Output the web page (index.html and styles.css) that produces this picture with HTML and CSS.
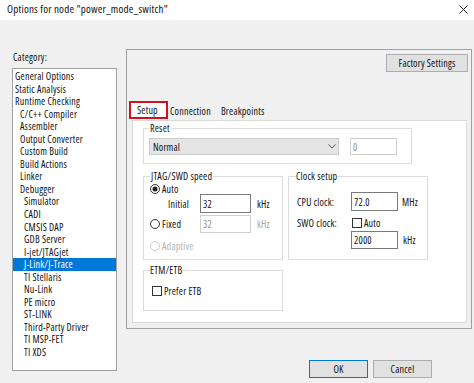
FILE: index.html
```html
<!DOCTYPE html>
<html>
<head>
<meta charset="utf-8">
<title>Options for node</title>
<link rel="stylesheet" href="styles.css">
</head>
<body>
<div class="titlebar">
  <span class="title">Options for node "power_mode_switch"</span>
  <svg class="close" width="9" height="9" viewBox="0 0 9 9"><path d="M0.5 0.5L8.5 8.5M8.5 0.5L0.5 8.5" stroke="#222" stroke-width="1" fill="none"/></svg>
</div>
<div class="content">
  <div class="left">
    <div class="cat-label">Category:</div>
    <ul class="listbox">
      <li class="l0">General Options</li>
      <li class="l0">Static Analysis</li>
      <li class="l0">Runtime Checking</li>
      <li class="l1">C/C++ Compiler</li>
      <li class="l1">Assembler</li>
      <li class="l1">Output Converter</li>
      <li class="l1">Custom Build</li>
      <li class="l1">Build Actions</li>
      <li class="l1">Linker</li>
      <li class="l1">Debugger</li>
      <li class="l2">Simulator</li>
      <li class="l2">CADI</li>
      <li class="l2">CMSIS DAP</li>
      <li class="l2">GDB Server</li>
      <li class="l2">I-jet/JTAGjet</li>
      <li class="l2 sel">J-Link/J-Trace</li>
      <li class="l2">TI Stellaris</li>
      <li class="l2">Nu-Link</li>
      <li class="l2">PE micro</li>
      <li class="l2">ST-LINK</li>
      <li class="l2">Third-Party Driver</li>
      <li class="l2">TI MSP-FET</li>
      <li class="l2">TI XDS</li>
    </ul>
  </div>
  <div class="right">
    <div class="frame">
      <div class="frame-top"><div class="btn factory">Factory Settings</div></div>
      <div class="tabs">
        <div class="tab selected">Setup</div>
        <div class="tab t-conn">Connection</div>
        <div class="tab t-bp">Breakpoints</div>
      </div>
      <div class="panel">
        <fieldset class="grp g-reset">
          <legend>Reset</legend>
          <div class="row-reset">
            <div class="select"><span>Normal</span>
              <svg width="8" height="5" viewBox="0 0 8 5"><polyline points="0.5,0.5 4,4 7.5,0.5" fill="none" stroke="#555" stroke-width="1"/></svg>
            </div>
            <div class="input w47 disabled">0</div>
          </div>
        </fieldset>
        <div class="grp-row">
          <fieldset class="grp g-jtag">
            <legend>JTAG/SWD speed</legend>
            <div class="r-auto">
              <svg class="radio" width="10" height="10" viewBox="0 0 10 10"><circle cx="5" cy="5" r="4.5" fill="#fff" stroke="#333"/><circle cx="5" cy="5" r="2.5" fill="#222"/></svg>
              <span class="rlabel">Auto</span>
            </div>
            <div class="r-initial">
              <span class="lbl-initial">Initial</span>
              <div class="input w51 h19">32</div>
              <span class="unit">kHz</span>
            </div>
            <div class="r-fixed">
              <svg class="radio" width="10" height="10" viewBox="0 0 10 10"><circle cx="5" cy="5" r="4.5" fill="#fff" stroke="#333"/></svg>
              <span class="rlabel lbl-fixed">Fixed</span>
              <div class="input w51 h18 disabled">32</div>
              <span class="unit dis">kHz</span>
            </div>
            <div class="r-adaptive">
              <svg class="radio" width="10" height="10" viewBox="0 0 10 10"><circle cx="5" cy="5" r="4.5" fill="#fff" stroke="#cccccc"/></svg>
              <span class="rlabel dis-light">Adaptive</span>
            </div>
          </fieldset>
          <fieldset class="grp g-clock">
            <legend>Clock setup</legend>
            <div class="c-row1">
              <span class="lbl-cpu">CPU clock:</span>
              <div class="input w47 h19">72.0</div>
              <span class="unit u-mhz">MHz</span>
            </div>
            <div class="c-row2">
              <span class="lbl-swo">SWO clock:</span>
              <div class="check"></div>
              <span class="clabel">Auto</span>
            </div>
            <div class="c-row3">
              <div class="input w47 h18">2000</div>
              <span class="unit u-khz">kHz</span>
            </div>
          </fieldset>
        </div>
        <fieldset class="grp g-etm">
          <legend>ETM/ETB</legend>
          <div class="e-row">
            <div class="check"></div>
            <span class="clabel">Prefer ETB</span>
          </div>
        </fieldset>
      </div>
    </div>
    <div class="buttons">
      <div class="btn dlg ok">OK</div>
      <div class="btn dlg">Cancel</div>
    </div>
  </div>
</div>
</body>
</html>
```
FILE: styles.css
```css
* { box-sizing: border-box; }
html, body { margin: 0; padding: 0; }
body {
  width: 474px;
  height: 383px;
  overflow: hidden;
  background: #f0f0f0;
  color: #111;
  font-family: "Open Sans", "Noto Sans", "Liberation Sans", Arial, sans-serif;
  font-stretch: 75%;
  font-size: 10px;
  letter-spacing: 0.2px;
  line-height: 12px;
}
.titlebar {
  height: 20px;
  background: #fff;
  display: flex;
  align-items: center;
  justify-content: space-between;
  padding: 0 6px 2px 7px;
}
.title { font-size: 11px; line-height: 12px; }
.close { display: block; margin-top: 1px; }

.content { display: flex; padding-left: 12px; }
.left { width: 105px; }
.cat-label { margin-top: 31px; height: 12px; padding-left: 1px; }
.listbox {
  list-style: none;
  margin: 5px 0 0;
  padding: 1px 0 0;
  height: 303px;
  border: 1px solid #a0a0a0;
  background: #fff;
}
.listbox li { height: 12.55px; line-height: 12.55px; white-space: nowrap; }
.l0 { padding-left: 2px; }
.l1 { padding-left: 7px; }
.l2 { padding-left: 11px; }
.sel { background: #0078d7; color: #fff; }

.right { margin-left: 9px; margin-top: 29px; width: 346px; }
.frame {
  height: 280px;
  border: 1px solid #a0a0a0;
  display: flex;
  flex-direction: column;
}
.frame-top { display: flex; justify-content: flex-end; padding: 4px 3px 0 0; }
.btn {
  height: 18px;
  background: #e1e1e1;
  border: 1px solid #adadad;
  display: flex;
  align-items: center;
  justify-content: center;
}
.factory { width: 82px; }

.tabs { display: flex; margin-top: 29px; padding-left: 2px; height: 18px; }
.tab { display: flex; align-items: center; white-space: nowrap; }
.tab.selected {
  width: 39px;
  height: 18px;
  border: 2px solid #d3101f;
  padding-left: 6px;
  background: #fff;
}
.t-conn { padding: 2px 0 0 2px; }
.t-bp { padding-top: 2px; margin-left: 10px; }

.panel {
  flex: 1;
  margin: 1px 4px 5px 5px;
  background: #fff;
  border: 1px solid #dadada;
  padding: 1px 0 0 10px;
}

fieldset.grp {
  margin: 0;
  border: 1px solid #dcdcdc;
  min-width: 0;
  padding: 0;
}
fieldset.grp legend { padding: 0 1px; line-height: 12px; font-size: 10px; }

.g-reset { width: 269px; height: 42px; padding-left: 5px !important; }
.row-reset { display: flex; gap: 11px; margin-top: 4px; }
.select {
  width: 190px;
  height: 17px;
  background: #e5e5e5;
  border: 1px solid #cccccc;
  display: flex;
  align-items: center;
  justify-content: space-between;
  padding: 0 2px 0 3px;
}
.select svg { display: block; }

.input {
  height: 17px;
  background: #fff;
  border: 1px solid #7a7a7a;
  padding-left: 2px;
  display: flex;
  align-items: center;
}
.input.disabled { border-color: #cfcfcf; color: #8c8c8c; }
.w47 { width: 47px; }
.w51 { width: 51px; }
.h19 { height: 19px; }
.h18 { height: 18px; }

.grp-row { display: flex; gap: 5px; margin-top: 6px; }
.g-jtag { width: 140px; height: 90px; padding-left: 6px !important; }
.g-clock { width: 140px; height: 90px; padding-left: 7px !important; }
.g-clock legend { padding: 0 !important; }

.radio { display: block; flex: none; }
.rlabel { margin-left: 2px; }
.r-auto { display: flex; align-items: center; height: 10px; margin-top: 2px; line-height: 10px; }
.r-initial { display: flex; align-items: center; height: 19px; padding-left: 18px; }
.lbl-initial { width: 32px; }
.unit { margin-left: 6px; }
.r-fixed { display: flex; align-items: center; height: 18px; margin-top: 2px; }
.lbl-fixed { width: 38px; }
.r-adaptive { display: flex; align-items: center; height: 12px; margin-top: 7px; }
.dis { color: #a8a8a8; }
.dis-light { color: #b5b5b5; }

.c-row1 { display: flex; align-items: center; height: 19px; margin-top: 10px; padding-left: 1px; }
.lbl-cpu { width: 54px; }
.u-mhz { margin-left: 4px; }
.c-row2 { display: flex; align-items: center; height: 10px; margin-top: 7px; padding-left: 1px; line-height: 10px; }
.lbl-swo { width: 55px; }
.check { width: 10px; height: 10px; border: 1px solid #333; background: #fff; flex: none; }
.clabel { margin-left: 2px; }
.c-row3 { display: flex; align-items: center; height: 18px; margin-top: 3px; padding-left: 55px; }
.u-khz { margin-left: 5px; }

.g-etm { width: 140px; height: 47px; margin-top: 4px !important; padding-left: 6px !important; }
.g-etm legend { padding: 0 !important; }
.e-row { display: flex; align-items: center; height: 10px; margin-top: 10px; padding-left: 2px; line-height: 10px; }

.buttons { display: flex; justify-content: flex-end; gap: 5px; margin-top: 31px; padding-right: 40px; }
.dlg { width: 59px; }
.ok { border-color: #0078d7; }
```
